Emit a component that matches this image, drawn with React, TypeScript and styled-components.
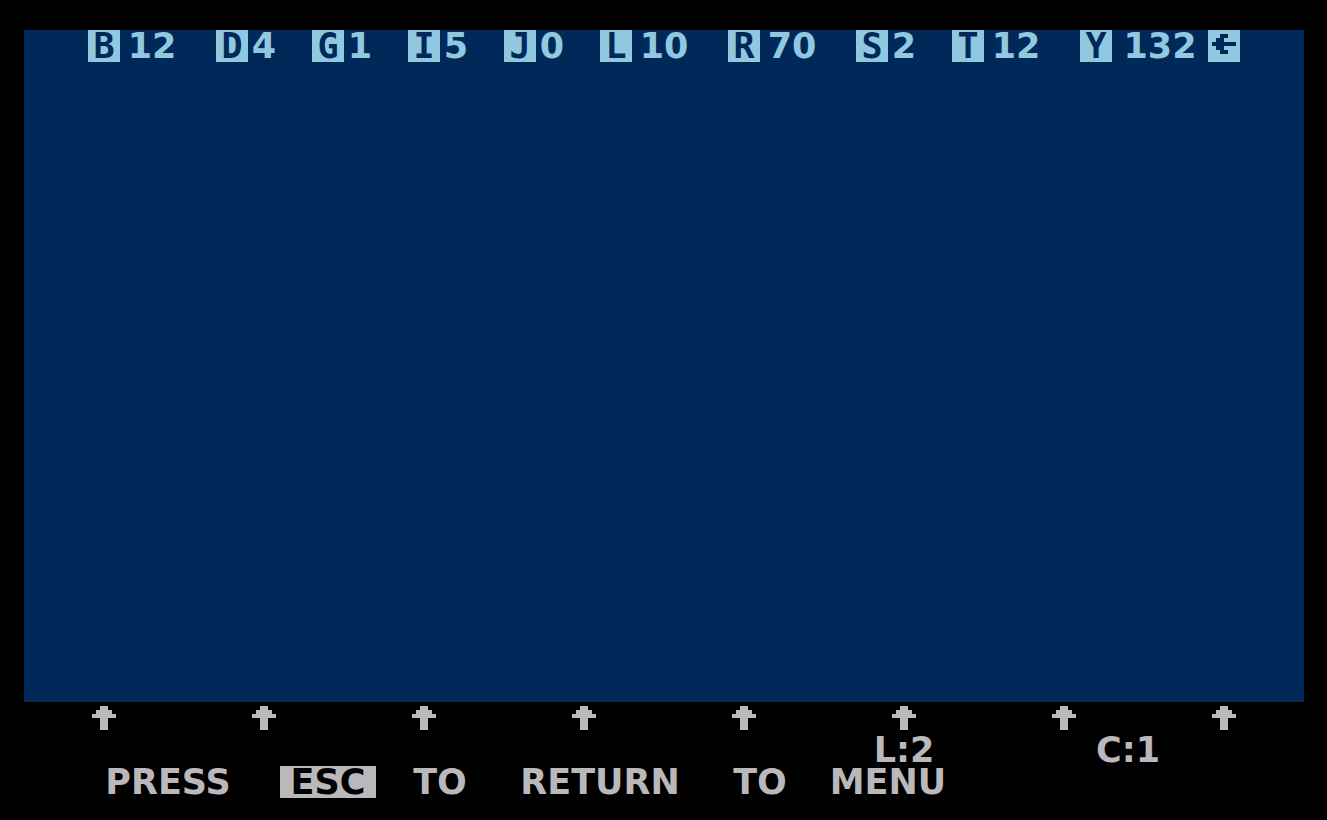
import React from 'react';
import styled, { createGlobalStyle } from 'styled-components';

const settings = [
  { letter: 'B', value: '12' },
  { letter: 'D', value: '4' },
  { letter: 'G', value: '1' },
  { letter: 'I', value: '5' },
  { letter: 'J', value: '0' },
  { letter: 'L', value: '10' },
  { letter: 'R', value: '70' },
  { letter: 'S', value: '2' },
  { letter: 'T', value: '12' },
  { letter: 'Y', value: '132' },
];

const tabStops = [1, 6, 11, 16, 21, 26, 31, 36];

function App() {
  return (
    <Screen>
      <GlobalStyle />
      <Editor>
        <FormatLine>
          {settings.map(({ letter, value }) => (
            <Setting key={letter}>
              <Letter $cells={1}>{letter}</Letter>
              <Cells $cells={value.length}>{value}</Cells>
            </Setting>
          ))}
          <ReturnMark />
        </FormatLine>
      </Editor>
      <TabRuler>
        {tabStops.map((stop) => (
          <TabMark key={stop} />
        ))}
      </TabRuler>
      <Status>
        <Cells $cells={3}>L:2</Cells>
        <Cells $cells={3}>C:1</Cells>
      </Status>
      <Message>
        <Cells $cells={5}>PRESS</Cells>
        <Key as="kbd" $cells={3}>
          ESC
        </Key>
        <Cells $cells={2}>TO</Cells>
        <Cells $cells={6}>RETURN</Cells>
        <Cells $cells={2}>TO</Cells>
        <Cells $cells={4}>MENU</Cells>
      </Message>
    </Screen>
  );
}
export default App;

function ReturnMark() {
  return (
    <Glyph viewBox="0 0 8 8" shapeRendering="crispEdges" aria-label="Return">
      <path fill="#90c8e0" d="M0 0h8v8H0z" />
      <path fill="#002859" d="M3 1h2v1H4v1h3v1H4v1h1v1H3V5H2V4H1V3h1V2h1z" />
    </Glyph>
  );
}

function TabMark() {
  return (
    <Glyph viewBox="0 0 8 8" shapeRendering="crispEdges" aria-label="Tab stop">
      <path fill="currentColor" d="M3 1h2v1h1v1h1v1H5v3H3V4H1V3h1V2h1z" />
    </Glyph>
  );
}

const GlobalStyle = createGlobalStyle`
  body {
    margin: 0;
    background: #000;
  }
`;

const Screen = styled.main`
  box-sizing: border-box;
  display: flex;
  flex-direction: column;
  min-height: 100vh;
  padding: 30px 23px 22px 24px;
  background: #000;
  color: #bab8ba;
  font-family: 'DejaVu Sans', sans-serif;
  font-size: 35px;
  font-weight: bold;
  line-height: 32px;
`;

const Editor = styled.section`
  flex: 1;
  padding: 0 64px;
  background: #002859;
  color: #90c8e0;
`;

const FormatLine = styled.div`
  display: flex;
`;

const Cells = styled.span<{ $cells: number }>`
  flex: none;
  width: ${({ $cells }) => $cells * 32}px;
  height: 32px;
  text-align: center;
  white-space: nowrap;
`;

const Setting = styled.div`
  display: flex;

  & + & {
    margin-left: 32px;
  }
`;

const Letter = styled(Cells)`
  background: #90c8e0;
  color: #002859;
  font-family: 'DejaVu Sans Mono', monospace;
`;

const Key = styled(Cells)`
  background: #bab8ba;
  color: #000;
  font: inherit;
`;

const Glyph = styled.svg`
  flex: none;
  display: block;
  width: 32px;
  height: 32px;
`;

const TabRuler = styled.div`
  display: flex;
  justify-content: space-between;
  padding: 0 64px;
`;

const Status = styled.div`
  display: flex;
  justify-content: flex-end;
  gap: 128px;
  padding-right: 128px;
`;

const Message = styled.div`
  display: flex;
  gap: 32px;
  padding: 0 64px;
`;
